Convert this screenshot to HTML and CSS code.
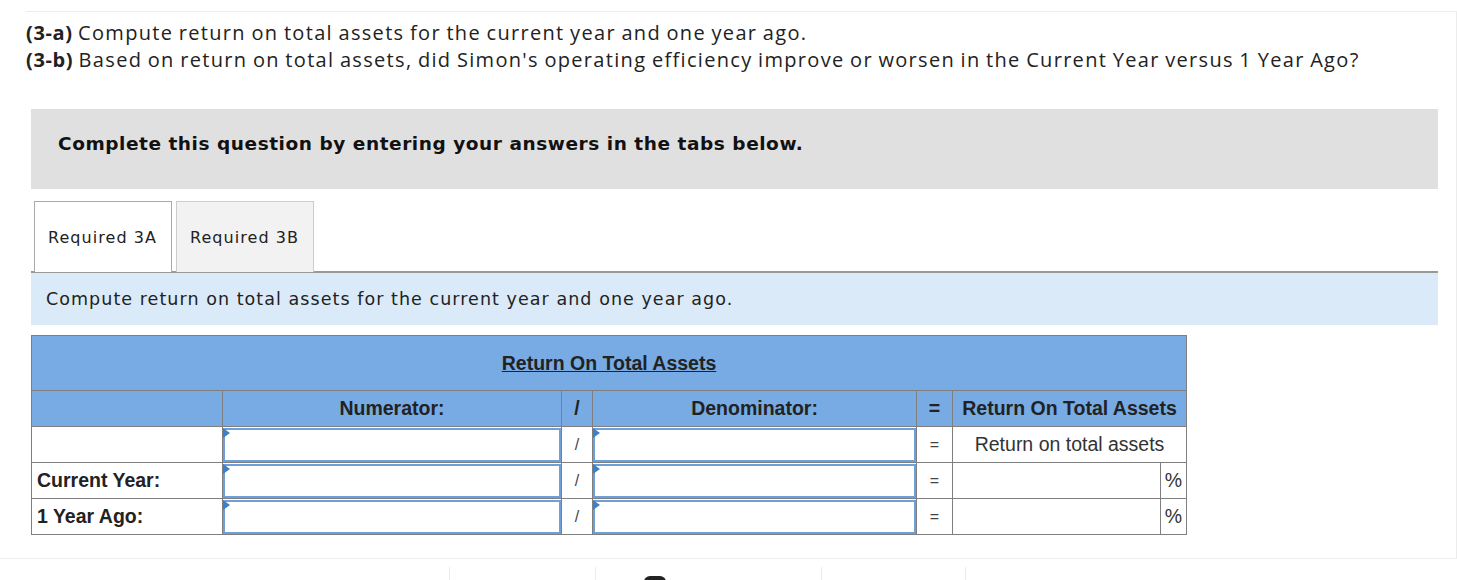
FILE: index.html
```html
<!DOCTYPE html>
<html>
<head>
<meta charset="utf-8">
<link rel="stylesheet" href="styles.css">
</head>
<body>
<div class="page">
  <div class="question">
    <p class="q"><b>(3-a)</b> Compute return on total assets for the current year and one year ago.</p>
    <p class="q"><b>(3-b)</b> Based on return on total assets, did Simon's operating efficiency improve or worsen in the Current Year versus 1 Year Ago?</p>
    <div class="notice">Complete this question by entering your answers in the tabs below.</div>
    <div class="tabs">
      <div class="tab active">Required 3A</div>
      <div class="tab">Required 3B</div>
    </div>
    <div class="desc">Compute return on total assets for the current year and one year ago.</div>
    <table class="grid">
      <colgroup>
        <col class="c-label"><col class="c-num"><col class="c-op"><col class="c-den"><col class="c-eq"><col class="c-val"><col class="c-pct">
      </colgroup>
      <tr class="h1"><th colspan="7"><u>Return On Total Assets</u></th></tr>
      <tr class="h2"><th></th><th>Numerator:</th><th>/</th><th>Denominator:</th><th>=</th><th colspan="2">Return On Total Assets</th></tr>
      <tr><td></td><td class="inp"><div class="field"></div></td><td class="op">/</td><td class="inp"><div class="field"></div></td><td class="op">=</td><td colspan="2" class="res">Return on total assets</td></tr>
      <tr><td class="lbl">Current Year:</td><td class="inp"><div class="field"></div></td><td class="op">/</td><td class="inp"><div class="field"></div></td><td class="op">=</td><td></td><td class="pct">%</td></tr>
      <tr><td class="lbl">1 Year Ago:</td><td class="inp"><div class="field"></div></td><td class="op">/</td><td class="inp"><div class="field"></div></td><td class="op">=</td><td></td><td class="pct">%</td></tr>
    </table>
  </div>
  <div class="footer">
    <div class="fcell w1"></div>
    <div class="fcell w2"></div>
    <div class="fcell w3"><span class="glyph"></span></div>
    <div class="fcell w4"></div>
    <div class="fcell w5"></div>
  </div>
</div>
</body>
</html>
```

FILE: styles.css
```css
* { box-sizing: border-box; }
html, body { margin: 0; padding: 0; background: #fff; }
.page { width: 1457px; height: 580px; overflow: hidden; padding-top: 11px; }
.question {
  margin-left: 26px;
  border-top: 1px solid #ececec;
  border-right: 1px solid #ececec;
  height: 547px;
  padding-top: 7px;
}
.q {
  margin: 0;
  font-family: "Open Sans", "Liberation Sans", sans-serif;
  font-size: 20px;
  line-height: 27px;
  color: #222;
  letter-spacing: 1.32px;
  word-spacing: -1px;
}
.q b { font-weight: 700; letter-spacing: 0.6px; }
.notice {
  margin: 36px 0 0 5px;
  width: 1407px;
  height: 80px;
  background: #e0e0e0;
  font-family: "DejaVu Sans", Verdana, sans-serif;
  font-weight: bold;
  font-size: 18.5px;
  letter-spacing: 0.55px;
  color: #111;
  padding: 24px 0 0 27px;
}
.tabs { display: flex; margin: 12px 0 0 8px; height: 71px; }
.tab {
  height: 71px;
  font-family: "DejaVu Sans", Verdana, sans-serif;
  font-size: 16px;
  letter-spacing: 1.05px;
  color: #222;
  padding: 26px 0 0 13px;
  border: 1px solid #ccc;
  border-bottom: none;
  background: #f2f2f2;
  width: 138px;
  margin-right: 4px;
}
.tab.active { background: #fff; border-color: #aaa; position: relative; z-index: 1; }
.desc {
  margin-left: 5px;
  width: 1407px;
  height: 54px;
  border-top: 2px solid #999;
  background: #dbeaf8;
  font-family: "DejaVu Sans", Verdana, sans-serif;
  font-size: 17.5px;
  letter-spacing: 1.05px;
  color: #222;
  padding: 16px 0 0 15px;
  margin-top: -1px;
}
.grid {
  margin: 10px 0 0 5px;
  border-collapse: collapse;
  width: 1155px;
  font-family: "Liberation Sans", Arial, sans-serif;
  font-size: 19.5px;
  color: #222;
  table-layout: fixed;
}
.c-label { width: 191px; }
.c-num { width: 339px; }
.c-op { width: 31px; }
.c-den { width: 324px; }
.c-eq { width: 36px; }
.c-val { width: 208px; }
.c-pct { width: 26px; }
.grid th, .grid td { border: 1px solid #7f7f7f; padding: 0; height: 36px; }
.grid th { background: #78abe3; font-weight: bold; }
.h1 th { height: 55px; text-align: center; }
.h2 th { text-align: center; }
.lbl { font-weight: bold; padding-left: 5px !important; }
.op { text-align: center; font-size: 16px; color: #444; }
.res { text-align: center; color: #333; }
.pct { text-align: center; color: #333; }
.inp { position: relative; }
.field {
  position: relative;
  height: 34px;
  border: 2px solid #6f9fd8;
  margin: 0;
}
.field::before {
  content: "";
  position: absolute;
  left: -2px; top: -2px;
  border-left: 7px solid #3f7fc6;
  border-top: 5px solid transparent;
  border-bottom: 5px solid transparent;
}
.footer {
  border-top: 1px solid #eeeeee;
  display: flex;
  height: 40px;
  padding-top: 8px;
}
.fcell { height: 30px; border-right: 1px solid #ececec; }
.w1 { width: 450px; }
.w2 { width: 146px; }
.w3 { width: 226px; position: relative; }
.w4 { width: 144px; }
.w5 { width: 100px; border-right: none; }
.glyph {
  position: absolute; left: 48px; top: 9px;
  width: 22px; height: 6px;
  border-top: 4px solid #222;
  border-radius: 8px 8px 0 0;
}
```
